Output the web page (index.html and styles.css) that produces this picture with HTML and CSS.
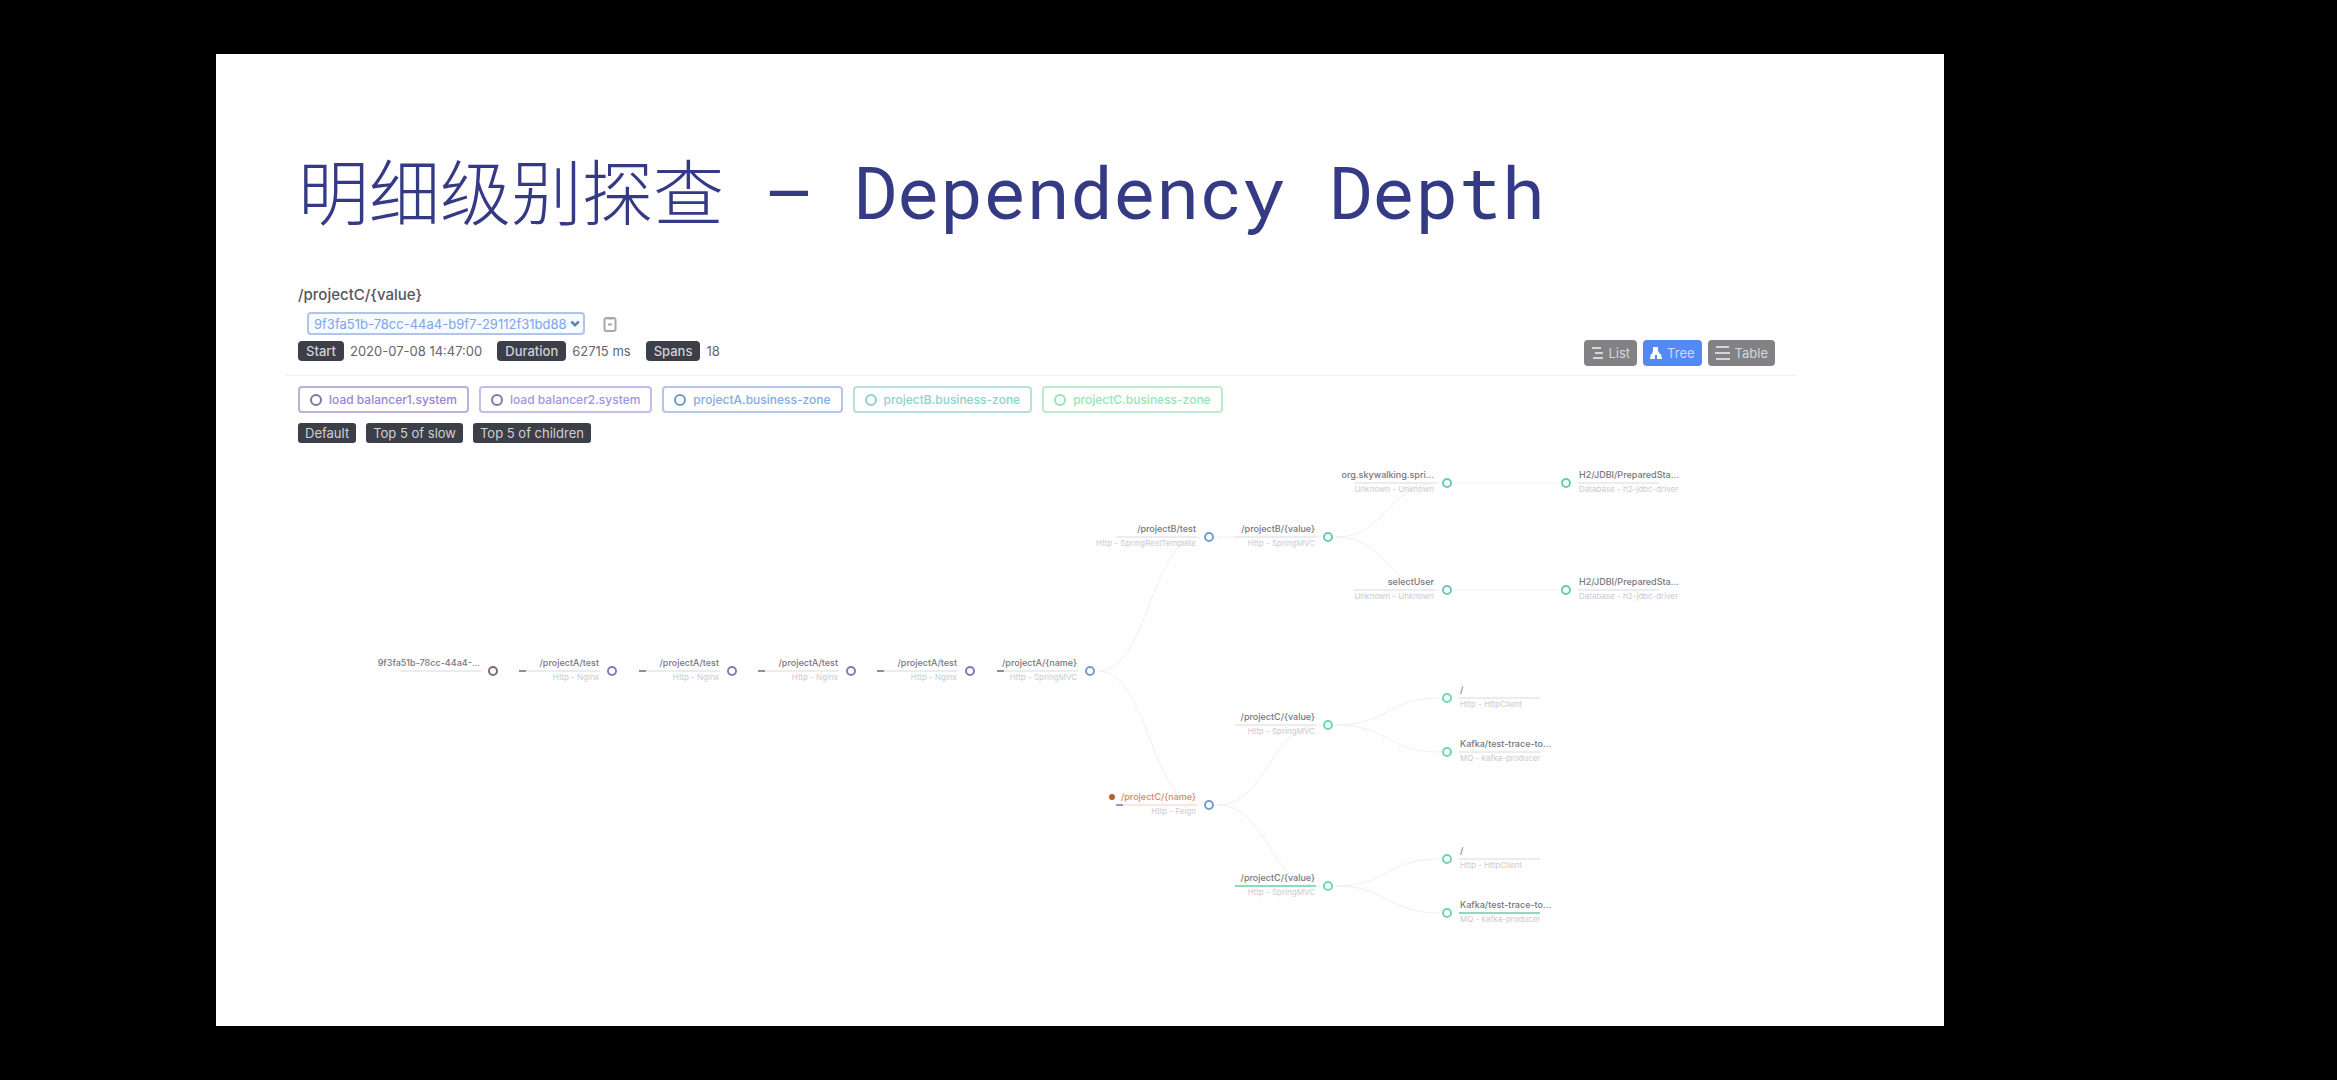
FILE: index.html
```html
<!doctype html>
<html lang="zh-CN">

<head>
	<meta charset="UTF-8" />
	<meta name="viewport" content="width=device-width, initial-scale=1.0" />
	<title>Dependency Depth</title>
	<link rel="stylesheet" href="styles.css">
</head>

<body>
	<main class="slide">
		<h1><span class="zh">明细级别探查</span> – Dependency Depth</h1>

		<header class="trace-head">
			<div class="trace-info">
				<h2>/projectC/{value}</h2>
				<div class="trace-id">
					<span class="select-wrap">
						<select aria-label="Trace ID">
							<option>9f3fa51b-78cc-44a4-b9f7-29112f31bd88</option>
						</select>
						<svg class="caret" viewBox="0 0 8 6"><path d="M1 1l3 3 3-3" /></svg>
					</span>
					<button type="button" class="copy" aria-label="Copy">
						<svg viewBox="0 0 14 16">
							<rect x="1.5" y="2" width="11" height="13" rx="2" />
							<path d="M4 2.5h6M5 8.5h4" />
						</svg>
					</button>
				</div>
				<div class="stats">
					<span class="tag">Start</span><span class="value">2020-07-08 14:47:00</span>
					<span class="tag">Duration</span><span class="value">62715 ms</span>
					<span class="tag">Spans</span><span class="value">18</span>
				</div>
			</div>
			<div class="views">
				<button type="button">
					<svg viewBox="0 0 12 12"><path d="M1 1h9M4 6h8M2 11h10" /></svg>List
				</button>
				<button type="button" class="active">
					<svg viewBox="0 0 12 12"><path class="solid" d="M3 0h5v4l2 3h1l1 5H7V8H5v4H0l1-5h1l1-3z" /></svg>Tree
				</button>
				<button type="button">
					<svg class="wide" viewBox="0 0 15 14"><path d="M1 1h13M0 7h15M1 13h14" /></svg>Table
				</button>
			</div>
		</header>

		<div class="services">
			<span class="chip lb1">load balancer1.system</span>
			<span class="chip lb2">load balancer2.system</span>
			<span class="chip pa">projectA.business-zone</span>
			<span class="chip pb">projectB.business-zone</span>
			<span class="chip pc">projectC.business-zone</span>
		</div>

		<div class="filters">
			<button type="button">Default</button>
			<button type="button">Top 5 of slow</button>
			<button type="button">Top 5 of children</button>
		</div>

		<svg id="tree" class="tree" viewBox="0 0 1498 500"></svg>
	</main>

	<script>
		// x, y, service, name, component, parent, options
		const nodes = [
			[195, 221, "root", "9f3fa51b-78cc-44a4-...", "", null],
			[314, 221, "lb1", "/projectA/test", "Http - Nginx", 0, { slow: true }],
			[434, 221, "lb1", "/projectA/test", "Http - Nginx", 1, { slow: true }],
			[553, 221, "lb2", "/projectA/test", "Http - Nginx", 2, { slow: true }],
			[672, 221, "lb2", "/projectA/test", "Http - Nginx", 3, { slow: true }],
			[792, 221, "pa", "/projectA/{name}", "Http - SpringMVC", 4, { slow: true }],
			[911, 87, "pa", "/projectB/test", "Http - SpringRestTemplate", 5],
			[1030, 87, "pb", "/projectB/{value}", "Http - SpringMVC", 6],
			[1149, 33, "pb", "org.skywalking.spri...", "Unknown - Unknown", 7],
			[1268, 33, "pb", "H2/JDBI/PreparedSta...", "Database - h2-jdbc-driver", 8, { leaf: true }],
			[1149, 140, "pb", "selectUser", "Unknown - Unknown", 7],
			[1268, 140, "pb", "H2/JDBI/PreparedSta...", "Database - h2-jdbc-driver", 10, { leaf: true }],
			[911, 355, "pa", "/projectC/{name}", "Http - Feign", 5, { error: true }],
			[1030, 275, "pc", "/projectC/{value}", "Http - SpringMVC", 12],
			[1149, 248, "pc", "/", "Http - HttpClient", 13, { leaf: true }],
			[1149, 302, "pc", "Kafka/test-trace-to...", "MQ - kafka-producer", 13, { leaf: true }],
			[1030, 436, "pc", "/projectC/{value}", "Http - SpringMVC", 12, { async: true }],
			[1149, 409, "pc", "/", "Http - HttpClient", 16, { leaf: true }],
			[1149, 463, "pc", "Kafka/test-trace-to...", "MQ - kafka-producer", 16, { leaf: true, async: true }],
		];

		const tree = document.getElementById("tree");

		function add(parent, tag, attrs, text) {
			const el = document.createElementNS("http://www.w3.org/2000/svg", tag);
			for (const key in attrs) {
				el.setAttribute(key, attrs[key]);
			}
			if (text) {
				el.textContent = text;
			}
			parent.appendChild(el);
			return el;
		}

		nodes.forEach(([x, y, , , , parent]) => {
			if (parent === null || parent < 5) {
				return;
			}
			const [px, py] = nodes[parent];
			const mid = (px + x) / 2;
			add(tree, "path", { class: "link", d: `M${px + 8} ${py}C${mid} ${py} ${mid} ${y} ${x - 8} ${y}` });
		});

		nodes.forEach(([x, y, service, name, component, parent, opts = {}]) => {
			const g = add(tree, "g", {
				class: "node " + service + (opts.leaf ? " leaf" : "") + (opts.error ? " error" : "") + (opts.async ? " async" : ""),
				transform: `translate(${x} ${y})`,
			});
			const textX = opts.leaf ? 13 : -13;
			add(g, "rect", { class: "bar", x: opts.leaf ? 12 : -93, y: -1, width: 81, height: 2 });
			if (opts.slow || opts.error) {
				add(g, "rect", { class: "self", x: -93, y: -1, width: 7, height: 2 });
			}
			if (opts.error) {
				add(g, "circle", { class: "alert", cx: -97, cy: -8, r: 3 });
			}
			add(g, "circle", { class: "dot", r: 4 });
			add(g, "text", { class: "name", x: textX, y: -5 }, name);
			add(g, "text", { class: "component", x: textX, y: 9 }, component);
		});
	</script>
</body>

</html>
```
FILE: styles.css
```css
* {
	box-sizing: border-box;
}

body {
	margin: 0;
	padding: 54px 393px 54px 216px;
	background: #000;
	font-family: Inter, "Noto Sans CJK SC", sans-serif;
	font-size: 13px;
	color: #65676e;
}

.slide {
	min-height: calc(100vh - 108px);
	padding: 90px 148px 0 82px;
	background: #fefefe;
}

h1 {
	margin: 0;
	color: #353a85;
	font-family: "Roboto Mono", "DejaVu Sans Mono", "Noto Sans CJK SC", monospace;
	font-size: 72px;
	font-weight: 400;
	line-height: 96px;
	white-space: nowrap;
}

.zh {
	font-size: 71px;
	font-weight: 300;
}

h2 {
	margin: 0;
	color: #55565c;
	font-size: 15px;
	font-weight: 500;
	line-height: 20px;
}

button,
select {
	font: inherit;
	border: 0;
	cursor: pointer;
}

.trace-head {
	display: flex;
	justify-content: space-between;
	align-items: flex-end;
	margin: 45px 0 0 -13px;
	padding: 0 0 9px 13px;
	border-bottom: 1px solid #f0f0f2;
}

.trace-info {
	padding-bottom: 5px;
}

.trace-id {
	display: flex;
	align-items: center;
	gap: 18px;
	margin: 7px 0 6px 9px;
}

.select-wrap {
	position: relative;
}

select {
	display: block;
	width: 278px;
	height: 23px;
	padding: 0 5px;
	appearance: none;
	border: 2px solid #b3c4ea;
	border-radius: 4px;
	background: #f6fbff;
	color: #83a3ea;
}

.caret {
	position: absolute;
	top: 8px;
	right: 5px;
	width: 10px;
	height: 8px;
	fill: none;
	stroke: #5c85b8;
	stroke-width: 2;
}

.copy {
	width: 14px;
	height: 16px;
	padding: 0;
	background: none;
}

.copy svg {
	display: block;
	width: 14px;
	height: 16px;
	fill: none;
	stroke: #a8a8ac;
	stroke-width: 2;
}

.stats {
	display: flex;
	align-items: center;
}

.tag {
	padding: 0 8px;
	border-radius: 4px;
	background: #3d3f48;
	color: #d0d0d6;
	font-weight: 500;
	line-height: 20px;
}

.value {
	margin: 0 15px 0 6px;
}

.views {
	display: flex;
	gap: 6px;
	margin-right: 21px;
}

.views button {
	display: flex;
	align-items: center;
	gap: 5px;
	height: 26px;
	padding: 0 7px;
	border-radius: 4px;
	background: #828284;
	color: #d6d6d8;
}

.views svg {
	width: 12px;
	height: 12px;
	fill: none;
	stroke: #d6d6d8;
	stroke-width: 2;
}

.views .wide {
	width: 15px;
	height: 14px;
}

.views .solid {
	fill: #fff;
	stroke: none;
}

.views .active {
	background: #5489f5;
	color: #c9dbff;
}

.services,
.filters {
	display: flex;
	gap: 10px;
	margin-top: 10px;
}

.chip {
	display: flex;
	align-items: center;
	gap: 7px;
	height: 27px;
	padding: 0 10px;
	border: 2px solid;
	border-radius: 4px;
	font-size: 12px;
	font-weight: 500;
}

.chip::before {
	content: "";
	width: 8px;
	height: 8px;
	border: 2px solid;
	border-radius: 50%;
}

.chip.lb1 {
	border-color: #bdb0dc;
	color: #9c85cc;
}

.chip.lb2 {
	border-color: #c3bdec;
	color: #a096e0;
}

.chip.pa {
	border-color: #b3c6e8;
	color: #84ace0;
}

.chip.pb {
	border-color: #b5e0de;
	color: #8ed2cc;
}

.chip.pc {
	border-color: #bdebd0;
	color: #98e4b4;
}

.chip.lb1::before,
.chip.lb2::before {
	border-color: #8176ac;
}

.chip.pa::before {
	border-color: #6d9dbe;
}

.filters button {
	height: 20px;
	padding: 0 7px;
	border-radius: 3px;
	background: #3d3f48;
	color: #d0d0d6;
	line-height: 20px;
}

.tree {
	display: block;
	width: 100%;
	margin-top: 7px;
}

.link {
	fill: none;
	stroke: #f0f0f2;
	stroke-width: 1;
}

.dot {
	fill: #fff;
	stroke-width: 2;
}

.root .dot {
	stroke: #84657f;
}

.lb1 .dot,
.lb2 .dot {
	stroke: #8579bd;
}

.pa .dot {
	stroke: #749dc8;
}

.pb .dot {
	stroke: #66cbb6;
}

.pc .dot {
	stroke: #70d6af;
}

.bar {
	fill: #ececf0;
}

.self {
	fill: #8c8ca6;
}

.node text {
	font-size: 9px;
	font-weight: 500;
	text-anchor: end;
}

.node.leaf text {
	text-anchor: start;
}

.name {
	fill: #77777c;
}

.node .component {
	fill: #cbcbd0;
	font-size: 8px;
	font-weight: 400;
}

.error .name {
	fill: #dd8468;
}

.error .bar {
	fill: #f8e6e3;
}

.error .self {
	fill: #8b98e0;
}

.alert {
	fill: #b4622f;
}

.async .bar {
	fill: #8adcbd;
}
```
